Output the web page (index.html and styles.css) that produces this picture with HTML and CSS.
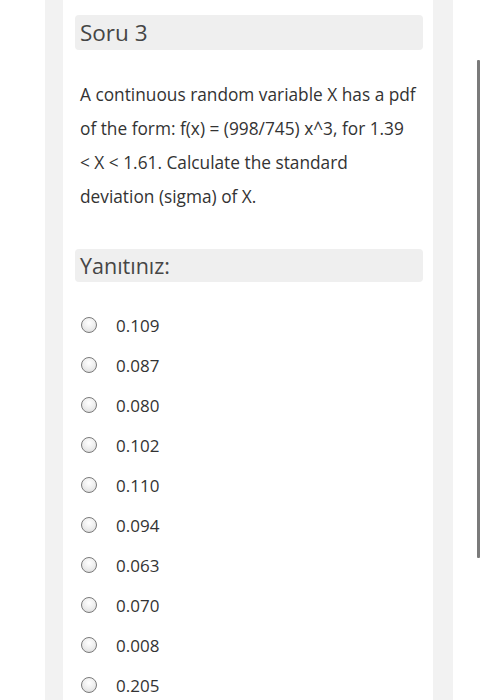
FILE: index.html
```html
<!DOCTYPE html>
<html>
<head>
<meta charset="utf-8">
<link rel="stylesheet" href="styles.css">
</head>
<body>
<div class="page">
  <div class="card">
    <div class="head-box soru">Soru 3</div>
    <p class="question">A continuous random variable X has a pdf of the form: f(x) = (998/745) x^3, for 1.39 &lt;&nbsp;X &lt; 1.61. Calculate the standard deviation (sigma) of X.</p>
    <div class="head-box answer">Yanıtınız:</div>
    <ul class="options">
      <li class="option"><span class="radio"></span><span>0.109</span></li>
      <li class="option"><span class="radio"></span><span>0.087</span></li>
      <li class="option"><span class="radio"></span><span>0.080</span></li>
      <li class="option"><span class="radio"></span><span>0.102</span></li>
      <li class="option"><span class="radio"></span><span>0.110</span></li>
      <li class="option"><span class="radio"></span><span>0.094</span></li>
      <li class="option"><span class="radio"></span><span>0.063</span></li>
      <li class="option"><span class="radio"></span><span>0.070</span></li>
      <li class="option"><span class="radio"></span><span>0.008</span></li>
      <li class="option"><span class="radio"></span><span>0.205</span></li>
    </ul>
  </div>
  <div class="scrollbar"></div>
</div>
</body>
</html>
```

FILE: styles.css
```css
html, body {
  margin: 0;
  padding: 0;
  background: #ffffff;
  font-family: "Open Sans", "Liberation Sans", sans-serif;
  color: #3d3d3d;
}
.page {
  position: relative;
  width: 484px;
  height: 700px;
  overflow: hidden;
  padding-left: 45px;
  box-sizing: border-box;
}
.card {
  width: 408px;
  min-height: 700px;
  box-sizing: border-box;
  border-left: 18px solid #f2f2f2;
  border-right: 20px solid #f2f2f2;
  padding: 15px 10px 0 12px;
}
.head-box {
  background: #efefef;
  border-radius: 4px;
  padding-left: 5px;
  color: #454545;
}
.soru {
  height: 35px;
  line-height: 36px;
  font-size: 22.5px;
}
.question {
  margin: 28px 0 0 0;
  padding-left: 5px;
  width: 338px;
  font-size: 17.3px;
  line-height: 34px;
  color: #333333;
}
.answer {
  margin-top: 35px;
  height: 33px;
  line-height: 34px;
  font-size: 21.5px;
}
.options {
  list-style: none;
  margin: 23px 0 0 0;
  padding: 0 0 0 5px;
}
.option {
  display: flex;
  align-items: center;
  height: 40px;
  font-size: 17px;
  color: #333333;
}
.radio {
  flex: none;
  width: 16px;
  height: 16px;
  box-sizing: border-box;
  border-radius: 50%;
  border: 1px solid #7a7a7a;
  background: radial-gradient(circle at 50% 35%, #ffffff 0%, #ececec 55%, #d2d2d2 100%);
  margin-left: 1px;
  margin-right: 19px;
}
.scrollbar {
  position: absolute;
  left: 477px;
  top: 60px;
  width: 3px;
  height: 498px;
  background: #7a7a7a;
  border-radius: 1px;
}
```
